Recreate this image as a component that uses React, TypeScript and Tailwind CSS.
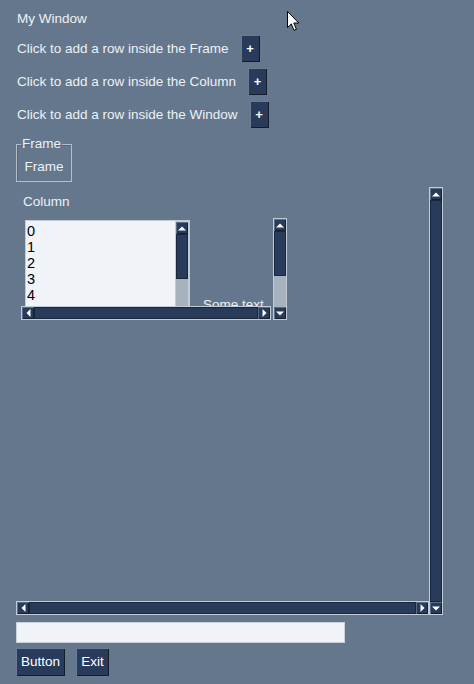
import type { ReactNode } from 'react';

type Dir = 'up' | 'down' | 'left' | 'right';

function Tri({ dir }: { dir: Dir }) {
  if (dir === 'up' || dir === 'down') {
    return (
      <svg width="8" height="5" viewBox="0 0 8 5">
        <polygon points={dir === 'up' ? '0,4.5 4,0.5 8,4.5' : '0,0.5 4,4.5 8,0.5'} fill="#ffffff" />
      </svg>
    );
  }
  return (
    <svg width="5" height="8" viewBox="0 0 5 8">
      <polygon points={dir === 'left' ? '4.5,0 0.5,4 4.5,8' : '0.5,0 4.5,4 0.5,8'} fill="#ffffff" />
    </svg>
  );
}

function ArrowBtn({ dir }: { dir: Dir }) {
  return (
    <div className="flex h-[12px] w-[12px] shrink-0 items-center justify-center bg-[#283b5b] shadow-[inset_1px_1px_0_#5a6c88,inset_-1px_-1px_0_#16202f]">
      <Tri dir={dir} />
    </div>
  );
}

// thumb: fixed class for the thumb size, or undefined when the thumb fills the track
function VScroll({ size, thumb }: { size: string; thumb?: string }) {
  return (
    <div className={`flex w-[14px] shrink-0 flex-col border border-[#c3cbd4] bg-[#a6b2be] ${size}`}>
      <ArrowBtn dir="up" />
      <div className="flex flex-1 flex-col">
        <div className={`border border-[#1a2639] bg-[#283b5b] ${thumb ?? 'flex-1'}`} />
      </div>
      <ArrowBtn dir="down" />
    </div>
  );
}

function HScroll({ size }: { size: string }) {
  return (
    <div className={`flex h-[14px] shrink-0 flex-row border border-[#c3cbd4] bg-[#a6b2be] ${size}`}>
      <ArrowBtn dir="left" />
      <div className="flex-1 border border-[#1a2639] bg-[#283b5b]" />
      <ArrowBtn dir="right" />
    </div>
  );
}

function Btn({ children, className }: { children: ReactNode; className: string }) {
  return (
    <button
      className={`flex items-center justify-center bg-[#283b5b] text-white shadow-[inset_1px_1px_0_#6a7b96,inset_-1px_-1px_0_#141c2a] ${className}`}
    >
      {children}
    </button>
  );
}

function AddRow({ label }: { label: string }) {
  return (
    <div className="flex h-[27px] items-center gap-[12px]">
      <span className="pl-px">{label}</span>
      <Btn className="h-[27px] w-[19px] text-[13px] font-bold">+</Btn>
    </div>
  );
}

function Cursor() {
  return (
    <svg className="absolute left-[287px] top-[11px]" width="13" height="21" viewBox="0 0 13 21">
      <path
        d="M0.5 0.5 L0.5 16.5 L4.3 12.9 L7 19.3 L9.4 18.3 L6.8 12 L11.8 12 Z"
        fill="#ffffff"
        stroke="#000000"
        strokeWidth="1"
        strokeLinejoin="round"
      />
    </svg>
  );
}

export default function App() {
  const items = ['0', '1', '2', '3', '4'];

  return (
    <div className="relative h-[684px] w-[474px] overflow-hidden bg-[#64778d] font-['Liberation_Sans',Arial,sans-serif] text-[13.5px] leading-[16px] text-[#eef1f4]">
      <div className="flex flex-col items-start pl-[16px]">
        <div className="mt-[11px] pl-px">My Window</div>

        <div className="mt-[8px] flex flex-col gap-[6px]">
          <AddRow label="Click to add a row inside the Frame" />
          <AddRow label="Click to add a row inside the Column" />
          <AddRow label="Click to add a row inside the Window" />
        </div>

        <fieldset className="mt-[8px] w-[56px] border border-[#b4bfca] px-[4px] pb-[6px] pt-[7px] shadow-[inset_1px_1px_0_#55677c]">
          <legend className="px-px">Frame</legend>
          <div className="text-center">Frame</div>
        </fieldset>

        {/* scrollable column */}
        <div className="mt-[5px] flex flex-row">
          <div className="flex w-[413px] flex-col">
            <div className="h-[414px] overflow-hidden">
              <div className="ml-[7px] mt-[7px]">Column</div>

              <div className="ml-[5px] mt-[8px] flex flex-row gap-[1px]">
                <div className="flex w-[251px] flex-col">
                  <div className="flex h-[88px] flex-row items-start overflow-hidden">
                    <div className="ml-[4px] mt-[2px] flex h-[100px] shrink-0 flex-row border border-[#c3cbd4]">
                      <div className="w-[149px] bg-[#f0f3f7] pl-px pt-[2px] text-[14.5px] text-black">
                        {items.map((it) => (
                          <div key={it}>{it}</div>
                        ))}
                      </div>
                      <VScroll size="h-full" thumb="h-[45px]" />
                    </div>
                    <div className="ml-[13px] mt-[79px] shrink-0 whitespace-nowrap">Some text</div>
                  </div>
                  <HScroll size="w-[250px]" />
                </div>
                <VScroll size="h-[102px]" thumb="h-[45px]" />
              </div>
            </div>
            <HScroll size="w-[413px]" />
          </div>
          <VScroll size="h-[428px]" />
        </div>

        <input
          className="mt-[7px] h-[21px] w-[329px] border border-[#c9d1da] bg-[#f0f3f7] px-[2px] text-black outline-none"
          defaultValue=""
        />

        <div className="mt-[5px] flex flex-row gap-[11px]">
          <Btn className="h-[28px] w-[49px]">Button</Btn>
          <Btn className="h-[28px] w-[33px]">Exit</Btn>
        </div>
      </div>

      <Cursor />
    </div>
  );
}
